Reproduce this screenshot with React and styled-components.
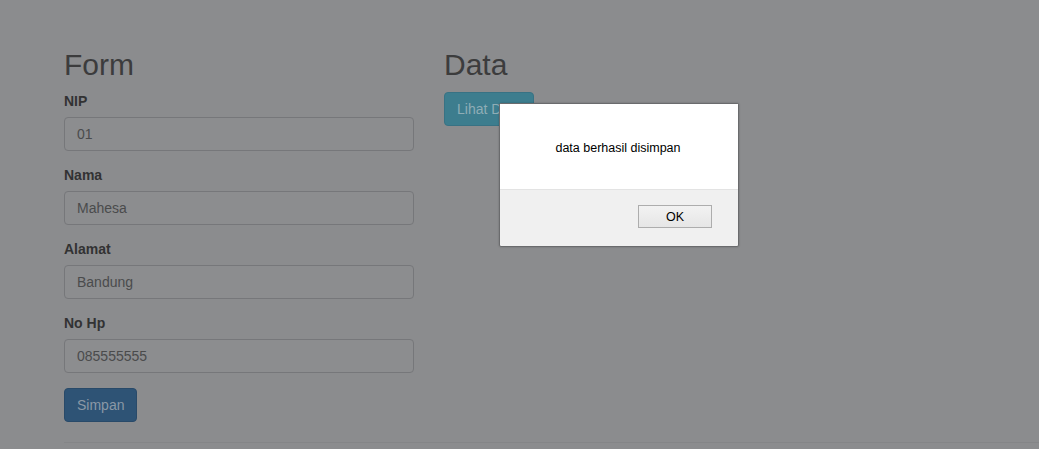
import React from 'react';
import styled, { createGlobalStyle } from 'styled-components';

const GlobalStyle = createGlobalStyle`
  html, body {
    margin: 0;
    padding: 0;
    background: #8b8c8e;
    font-family: "Liberation Sans", Arial, sans-serif;
    font-size: 14px;
    line-height: 1.42857;
    color: #2a2a2a;
  }
  * {
    box-sizing: border-box;
  }
`;

const Page = styled.div`
  position: relative;
  width: 1039px;
  height: 449px;
  overflow: hidden;
  padding: 29px 0 0 64px;
`;

const Row = styled.div`
  display: flex;
  gap: 30px;
`;

const Column = styled.div`
  width: 350px;
`;

const Heading = styled.h2`
  margin: 19px 0 11px;
  font-size: 30px;
  font-weight: 500;
  line-height: 1.1;
  color: #3c3c3d;
`;

const Group = styled.div`
  margin-bottom: 15px;
`;

const Label = styled.label`
  display: block;
  margin-bottom: 5px;
  font-weight: bold;
  color: #323233;
`;

const Input = styled.div`
  height: 34px;
  padding: 6px 12px;
  font-size: 14px;
  line-height: 20px;
  color: #4a4b4c;
  border: 1px solid #76777a;
  border-radius: 4px;
  background: #8c8d8f;
`;

const Button = styled.button`
  display: inline-block;
  height: 34px;
  padding: 6px 12px;
  font-family: inherit;
  font-size: 14px;
  line-height: 20px;
  border: 1px solid ${p => p.border};
  border-radius: 4px;
  background: ${p => p.bg};
  color: ${p => p.fg};
  cursor: pointer;
`;

const Rule = styled.hr`
  margin: 20px 0 0;
  border: 0;
  border-top: 1px solid #848587;
  width: 1000px;
`;

const Dialog = styled.div`
  position: absolute;
  left: 499px;
  top: 103px;
  width: 240px;
  height: 144px;
  border: 1px solid #6a6b6d;
  border-radius: 2px;
  background: #f0f0f0;
  box-shadow: 0 0 2px rgba(0, 0, 0, 0.25);
  display: flex;
  flex-direction: column;
  font-family: "Liberation Sans", Arial, sans-serif;
  font-size: 12.5px;
  color: #000;
`;

const Message = styled.div`
  height: 86px;
  background: #fff;
  border-bottom: 1px solid #e3e3e3;
  display: flex;
  align-items: center;
  justify-content: center;
  padding-top: 5px;
  padding-right: 2px;
`;

const Footer = styled.div`
  flex: 1;
  display: flex;
  justify-content: flex-end;
  align-items: flex-start;
  padding: 15px 26px 0 0;
`;

const OkButton = styled.button`
  width: 74px;
  height: 23px;
  font-family: "Liberation Sans", Arial, sans-serif;
  font-size: 12.5px;
  color: #000;
  border: 1px solid #adadad;
  background: linear-gradient(#f2f2f2, #e6e6e6);
  padding: 0;
`;

const fields = [
  { label: 'NIP', value: '01' },
  { label: 'Nama', value: 'Mahesa' },
  { label: 'Alamat', value: 'Bandung' },
  { label: 'No Hp', value: '085555555' },
];

export default function App() {
  return (
    <Page>
      <GlobalStyle />
      <Row>
        <Column>
          <Heading>Form</Heading>
          {fields.map(f => (
            <Group key={f.label}>
              <Label>{f.label}</Label>
              <Input>{f.value}</Input>
            </Group>
          ))}
          <Button bg="#2e5375" border="#294a69" fg="#8a98a6">Simpan</Button>
        </Column>
        <Column>
          <Heading>Data</Heading>
          <Button bg="#3d7d8e" border="#387284" fg="#8fadb6">
            Lihat Data
          </Button>
        </Column>
      </Row>
      <Rule />
      <Dialog>
        <Message>data berhasil disimpan</Message>
        <Footer>
          <OkButton>OK</OkButton>
        </Footer>
      </Dialog>
    </Page>
  );
}
